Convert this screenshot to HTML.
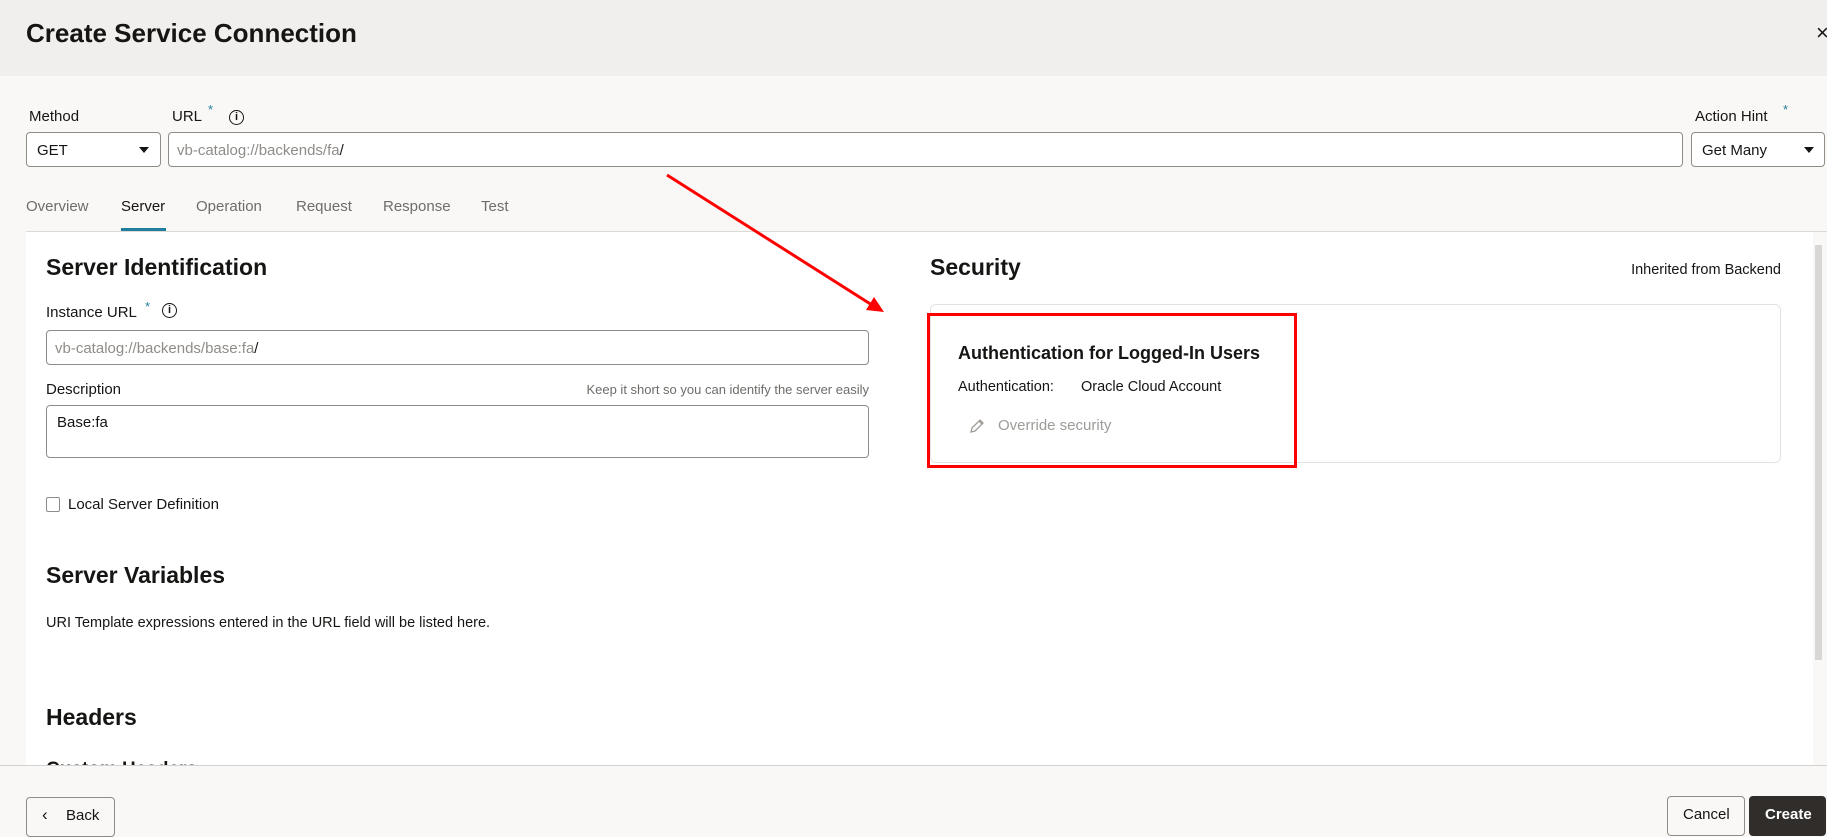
<!DOCTYPE html>
<html><head><meta charset="utf-8"><style>
*{box-sizing:border-box;margin:0;padding:0}
body{width:1827px;height:828px;overflow:hidden;background:#f9f8f6;font-family:"Liberation Sans",sans-serif;color:#161513;font-size:15px;position:relative}
.a{position:absolute}
.hdr{left:0;top:0;width:1827px;height:76px;background:#f1efed}
.inp{border:1px solid #8f8c88;border-radius:4px;background:#fff}
.lbl{font-size:15px;color:#161513}
.ast{color:#227e9e;font-size:13px}
.tab{top:198px;font-size:15px;color:#6f6c69}
h2{font-size:23px;font-weight:bold;position:absolute}
.info{width:15px;height:15px;border:1.5px solid #161513;border-radius:50%;font-size:11px;font-weight:bold;text-align:center;line-height:12px}
.caret{width:0;height:0;border-left:5px solid transparent;border-right:5px solid transparent;border-top:6px solid #161513}
</style></head><body>
<div class="a hdr"></div>
<div class="a" style="left:26px;top:18px;font-size:26px;font-weight:bold">Create Service Connection</div>
<div class="a" style="left:1816px;top:20px;font-size:22px">×</div>

<div class="a lbl" style="left:29px;top:108px">Method</div>
<div class="a lbl" style="left:172px;top:108px">URL</div><div class="a ast" style="left:208px;top:102px">*</div>
<div class="a info" style="left:229px;top:110px">i</div>
<div class="a inp" style="left:26px;top:132px;width:135px;height:35px"></div>
<div class="a" style="left:37px;top:142px">GET</div><div class="a caret" style="left:139px;top:147px"></div>
<div class="a inp" style="left:168px;top:132px;width:1515px;height:35px"></div>
<div class="a" style="left:177px;top:142px;color:#8f8c88">vb-catalog://backends/fa<span style="color:#161513">/</span></div>
<div class="a lbl" style="left:1695px;top:108px">Action Hint</div><div class="a ast" style="left:1783px;top:102px">*</div>
<div class="a inp" style="left:1691px;top:132px;width:134px;height:35px"></div>
<div class="a" style="left:1702px;top:142px">Get Many</div><div class="a caret" style="left:1804px;top:147px"></div>

<div class="a tab" style="left:26px">Overview</div>
<div class="a tab" style="left:121px;color:#161513">Server</div>
<div class="a tab" style="left:196px">Operation</div>
<div class="a tab" style="left:296px">Request</div>
<div class="a tab" style="left:383px">Response</div>
<div class="a tab" style="left:481px">Test</div>
<div class="a" style="left:121px;top:228px;width:45px;height:3px;background:#227e9e"></div>
<div class="a" style="left:26px;top:231px;width:1801px;height:1px;background:#dcd9d6"></div>

<div class="a" style="left:26px;top:232px;width:1787px;height:533px;background:#fff"></div>
<div class="a" style="left:1815px;top:245px;width:7px;height:415px;background:#d9d7d5"></div>

<h2 style="left:46px;top:254px">Server Identification</h2>
<div class="a lbl" style="left:46px;top:304px">Instance URL</div><div class="a ast" style="left:145px;top:299px">*</div>
<div class="a info" style="left:162px;top:303px">i</div>
<div class="a inp" style="left:46px;top:330px;width:823px;height:35px"></div>
<div class="a" style="left:55px;top:340px;color:#8f8c88">vb-catalog://backends/base:fa<span style="color:#161513">/</span></div>
<div class="a lbl" style="left:46px;top:381px">Description</div>
<div class="a" style="right:958px;top:382px;font-size:13px;color:#6f6c69">Keep it short so you can identify the server easily</div>
<div class="a inp" style="left:46px;top:405px;width:823px;height:53px"></div>
<div class="a" style="left:57px;top:414px">Base:fa</div>
<div class="a" style="left:46px;top:497px;width:14px;height:15px;border:1px solid #8f8c88;border-radius:2px"></div>
<div class="a" style="left:68px;top:496px">Local Server Definition</div>
<h2 style="left:46px;top:562px">Server Variables</h2>
<div class="a" style="left:46px;top:615px;font-size:14.5px">URI Template expressions entered in the URL field will be listed here.</div>
<h2 style="left:46px;top:704px">Headers</h2>
<div class="a" style="left:46px;top:759px;width:200px;height:6px;overflow:hidden"><div style="font-size:19px;font-weight:bold;margin-top:0px">Custom Headers</div></div>

<h2 style="left:930px;top:254px">Security</h2>
<div class="a" style="right:46px;top:262px;font-size:14.5px">Inherited from Backend</div>
<div class="a" style="left:930px;top:304px;width:851px;height:159px;border:1px solid #e4e2e0;border-radius:6px;background:#fff"></div>
<div class="a" style="left:958px;top:343px;font-size:18px;font-weight:bold">Authentication for Logged-In Users</div>
<div class="a" style="left:958px;top:379px;font-size:14.5px">Authentication:</div>
<div class="a" style="left:1081px;top:379px;font-size:14.5px">Oracle Cloud Account</div>
<svg class="a" style="left:968px;top:417px" width="18" height="18" viewBox="0 0 18 18"><path d="M3 15 L4 11 L12 3 L15 6 L7 14 Z M11 4 L14 7" fill="none" stroke="#9e9b98" stroke-width="1.3"/></svg>
<div class="a" style="left:998px;top:417px;font-size:15px;color:#9e9b98">Override security</div>
<div class="a" style="left:927px;top:313px;width:370px;height:155px;border:3px solid #f00"></div>
<svg class="a" style="left:0;top:0" width="1827" height="828"><line x1="667" y1="175" x2="872" y2="305" stroke="#f00" stroke-width="3"/><polygon points="884,312 866,310 874,297" fill="#f00"/></svg>

<div class="a" style="left:0;top:765px;width:1827px;height:1px;background:#d4d1ce"></div>
<div class="a" style="left:26px;top:797px;width:89px;height:40px;border:1px solid #8f8c88;border-radius:4px"></div>
<div class="a" style="left:42px;top:805px;font-size:17px">‹</div><div class="a" style="left:66px;top:807px">Back</div>
<div class="a" style="left:1667px;top:796px;width:78px;height:40px;border:1px solid #8f8c88;border-radius:4px"></div>
<div class="a" style="left:1683px;top:806px">Cancel</div>
<div class="a" style="left:1749px;top:796px;width:77px;height:40px;background:#312d2a;border-radius:4px"></div>
<div class="a" style="left:1765px;top:806px;color:#fff;font-weight:bold">Create</div>
</body></html>
